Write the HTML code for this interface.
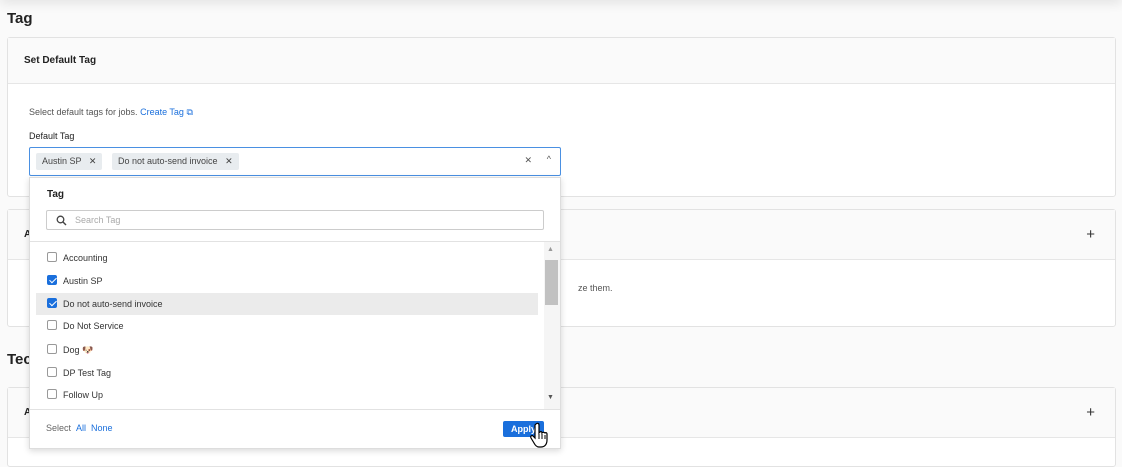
<!DOCTYPE html>
<html><head><style>
*{box-sizing:border-box;margin:0;padding:0}
body{width:1122px;height:456px;overflow:hidden;background:#fafafa;font-family:"Liberation Sans",sans-serif;position:relative;color:#222}
.top{position:absolute;left:0;top:-10px;width:1122px;height:10px;box-shadow:0 2px 12px rgba(0,0,0,.12)}
.h{position:absolute;left:7px;font-weight:bold;font-size:15px}
.card{position:absolute;left:7px;width:1109px;border:1px solid #e2e2e2;border-radius:3px;background:#fff}
.ch{background:#fafafa;border-bottom:1px solid #e6e6e6;font-weight:bold;font-size:10px;padding-left:16px;position:relative}
.plus{position:absolute;right:20px;font-size:15px;font-weight:normal;color:#333}
.sm{font-size:9px}
.inp{position:absolute;left:29px;top:147px;width:532px;height:29px;border:1px solid #4a90e2;border-radius:2px;background:#fff}
.chip{position:absolute;top:5px;height:17px;background:#e8ecef;border-radius:2px;font-size:9px;color:#444;padding:3px 6px}
.dd{position:absolute;left:29px;top:177px;width:532px;height:272px;background:#fff;border:1px solid #ddd;box-shadow:0 2px 6px rgba(0,0,0,.15)}
.it{position:absolute;left:6px;width:502px;height:22px;font-size:9px;color:#333;padding:6px 0 0 27px}
.cb{position:absolute;left:11px;top:5px;width:10px;height:10px;border:1px solid #999;border-radius:2px;background:#fff}
.cb.on{background:#1a6fdc;border-color:#1a6fdc}
.cb.on:after{content:"";position:absolute;left:2.5px;top:0px;width:3px;height:6px;border:solid #fff;border-width:0 1.5px 1.5px 0;transform:rotate(45deg)}
</style></head><body>
<div class="top"></div>
<div class="h" style="top:10px">Tag</div>
<div class="card" style="top:37px;height:160px">
 <div class="ch" style="height:46px;line-height:46px">Set Default Tag</div>
 <div class="sm" style="position:absolute;left:21px;top:69px;color:#555">Select default tags for jobs. <span style="color:#1a6fdc">Create Tag ⧉</span></div>
 <div class="sm" style="position:absolute;left:21px;top:93px;color:#222">Default Tag</div>
</div>
<div class="card" style="top:209px;height:118px">
 <div class="ch" style="height:50px;line-height:50px">A<span class="plus">+</span></div>
 <div class="sm" style="position:absolute;left:570px;top:73px;color:#555">ze them.</div>
</div>
<div class="h" style="top:351px">Tech</div>
<div class="card" style="top:387px;height:80px">
 <div class="ch" style="height:50px;line-height:50px">A<span class="plus">+</span></div>
</div>
<div class="inp">
 <div class="chip" style="left:6px">Austin SP &nbsp;&nbsp;✕</div>
 <div class="chip" style="left:82px">Do not auto-send invoice &nbsp;&nbsp;✕</div>
 <div style="position:absolute;right:28px;top:7px;font-size:9px;color:#555">✕</div>
 <div style="position:absolute;right:9px;top:6px;font-size:9px;color:#555">^</div>
</div>
<div class="dd">
 <div style="position:absolute;left:17px;top:11px;font-weight:bold;font-size:10px">Tag</div>
 <div style="position:absolute;left:16px;top:32px;width:498px;height:20px;border:1px solid #ccc;border-radius:2px;font-size:9px;color:#aaa;padding:4px 0 0 28px">Search Tag
  <svg style="position:absolute;left:9px;top:4px" width="11" height="11" viewBox="0 0 11 11"><circle cx="4.5" cy="4.5" r="3.3" fill="none" stroke="#444" stroke-width="1.3"/><path d="M7 7l3 3" stroke="#444" stroke-width="1.4"/></svg></div>
 <div style="position:absolute;left:0;top:63px;width:530px;border-top:1px solid #e2e2e2"></div>
 <div class="it" style="top:69px"><span class="cb"></span>Accounting</div>
 <div class="it" style="top:92px"><span class="cb on"></span>Austin SP</div>
 <div class="it" style="top:115px;background:#ebebeb"><span class="cb on"></span>Do not auto-send invoice</div>
 <div class="it" style="top:137px"><span class="cb"></span>Do Not Service</div>
 <div class="it" style="top:161px"><span class="cb"></span>Dog 🐶</div>
 <div class="it" style="top:184px"><span class="cb"></span>DP Test Tag</div>
 <div class="it" style="top:206px"><span class="cb"></span>Follow Up</div>
 <div style="position:absolute;left:514px;top:64px;width:16px;height:167px;background:#f5f5f5"></div>
 <div style="position:absolute;left:515px;top:82px;width:13px;height:45px;background:#c1c1c1"></div>
 <div style="position:absolute;left:517px;top:68px;font-size:7px;color:#999">▲</div>
 <div style="position:absolute;left:517px;top:216px;font-size:7px;color:#555">▼</div>
 <div style="position:absolute;left:0;top:231px;width:530px;border-top:1px solid #e2e2e2"></div>
 <div style="position:absolute;left:16px;top:245px;font-size:9px;color:#666">Select &nbsp;<span style="color:#1a6fdc">All</span>&nbsp; <span style="color:#1a6fdc">None</span></div>
 <div style="position:absolute;left:473px;top:243px;width:41px;height:16px;background:#1a6fdc;border-radius:2px;color:#fff;font-size:9px;font-weight:bold;padding:3px 0 0 8px">Apply</div>
 <svg style="position:absolute;left:500px;top:244px" width="20" height="28" viewBox="0 0 20 28"><path d="M6 2c1-1 3-1 3 1v8l1-1c1-1 2 0 2 1c1-1 2-1 3 0c1-1 2 0 2 1v6c0 4-2 7-6 7h-2c-2 0-4-2-5-4l-3-5c-1-2 1-3 2-2l2 2V3z" fill="#fff" stroke="#000" stroke-width="1.2"/><path d="M9 12v5M12 12v5M15 13v4" stroke="#000" stroke-width="1"/></svg>
</div>
</body></html>
